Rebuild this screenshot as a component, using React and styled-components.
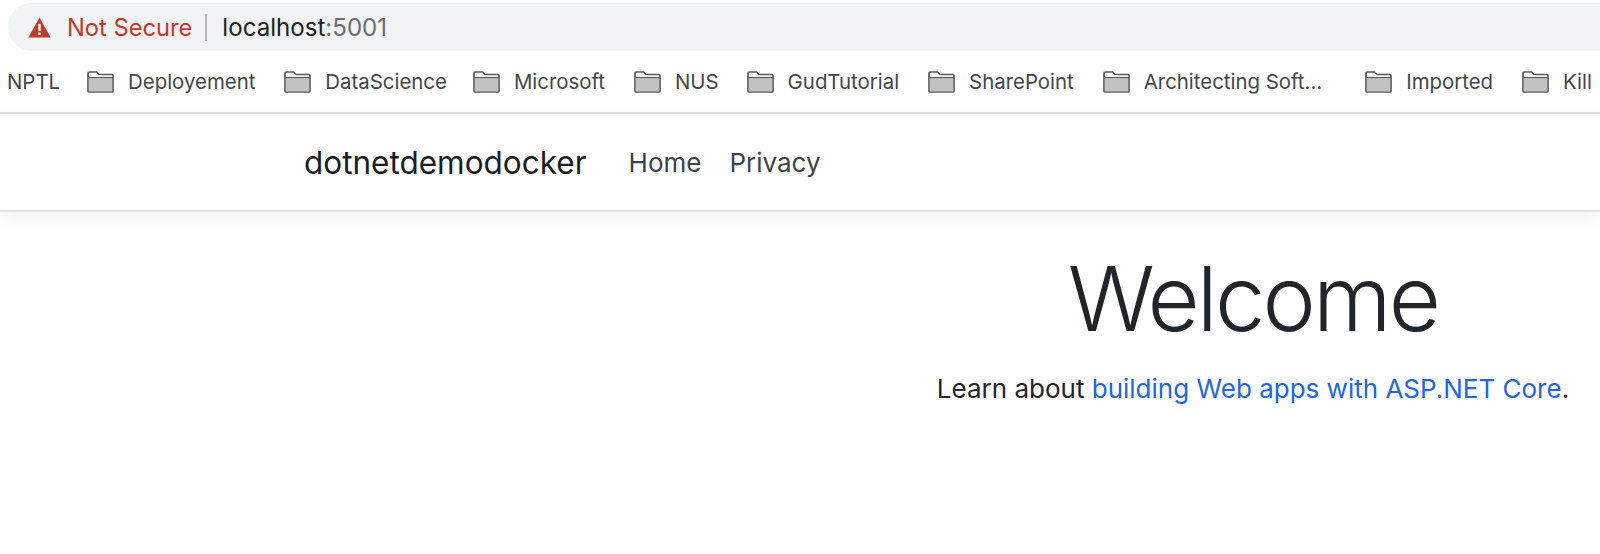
import React from "react";
import styled, { createGlobalStyle } from "styled-components";

const Global = createGlobalStyle`
  html, body {
    margin: 0;
    background: #fff;
    overflow: hidden;
  }
  body {
    font-family: Inter, "Liberation Sans", sans-serif;
  }
`;

const Page = styled.div`
  width: 1600px;
  height: 554px;
  overflow: hidden;
  display: flex;
  flex-direction: column;
`;

const Chrome = styled.header`
  height: 114px;
  box-sizing: border-box;
  border-bottom: 2px solid #e2e4e5;
  padding-top: 3px;
`;

const Omnibox = styled.div`
  height: 48px;
  margin-left: 8px;
  padding-left: 20px;
  display: flex;
  align-items: center;
  background: #f1f3f4;
  border-radius: 24px 0 0 24px;
`;

const Warning = styled.span`
  color: #c0392b;
  font-size: 23.7px;
  margin-left: 16px;
`;

const Divider = styled.span`
  width: 2px;
  height: 27px;
  margin: 0 15px 0 13px;
  background: #b4b6b8;
`;

const Host = styled.span`
  color: #202124;
  font-size: 24.1px;
`;

const Port = styled.span`
  color: #6b6e72;
`;

const Bookmarks = styled.nav`
  height: 61px;
  padding-left: 7px;
  display: flex;
  align-items: center;
  white-space: nowrap;
`;

const Bookmark = styled.div`
  display: flex;
  align-items: center;
  gap: 14px;
  margin-right: ${({ $after }) => $after}px;
  color: #43464a;
  font-size: 20.4px;
`;

const Navbar = styled.nav`
  height: 98px;
  box-sizing: border-box;
  padding: 0 0 0 304px;
  display: flex;
  align-items: center;
  background: #fff;
  border-bottom: 2px solid #e3e3e3;
  box-shadow: 0 4px 16px rgba(0, 0, 0, 0.06);
`;

const Brand = styled.a`
  color: #1c1c1e;
  font-size: 31.5px;
  margin-right: 42px;
`;

const NavLink = styled.a`
  color: #3e4349;
  font-size: 26px;
  margin-right: 28px;
`;

const Main = styled.main`
  padding-left: 906px;
  text-align: center;
  color: #212529;
`;

const Title = styled.h1`
  margin: 32px 0 0;
  font-size: 90px;
  font-weight: 300;
  line-height: 110px;
  letter-spacing: -2.8px;
`;

const Lead = styled.p`
  margin: 16px 0 0;
  font-size: 26px;
  line-height: 38px;
  white-space: nowrap;
`;

const DocLink = styled.a`
  color: #2468d8;
`;

const WarningIcon = () => (
  <svg width="23" height="21" viewBox="0 0 22 20">
    <path d="M11 .5 21.6 19.5H.4Z" fill="#c0392b" />
    <rect x="9.8" y="6.5" width="2.4" height="7" fill="#f1f3f4" />
    <rect x="9.8" y="14.8" width="2.4" height="2.4" fill="#f1f3f4" />
  </svg>
);

const FolderIcon = () => (
  <svg width="27" height="22" viewBox="0 0 27 22">
    <path d="M1 20V2.2C1 1.5 1.5 1 2.2 1H9.5L12 3.5H25C25.6 3.5 26 4 26 4.6V20C26 20.6 25.5 21 25 21H2C1.4 21 1 20.6 1 20Z" fill="#fff" stroke="#5a5a5a" strokeWidth="1.7" />
    <path d="M1.8 7.5H25.2V20.2H1.8Z" fill="#c2c2c2" />
    <path d="M1 6.6H26" stroke="#5a5a5a" strokeWidth="1.4" />
  </svg>
);

const bookmarks = [
  { name: "Deployement", after: 29 },
  { name: "DataScience", after: 26 },
  { name: "Microsoft", after: 29 },
  { name: "NUS", after: 28 },
  { name: "GudTutorial", after: 29 },
  { name: "SharePoint", after: 29 },
  { name: "Architecting Soft...", after: 43 },
  { name: "Imported", after: 29 },
  { name: "Kill", after: 0 },
];

export default function App() {
  return (
    <Page>
      <Global />
      <Chrome>
        <Omnibox>
          <WarningIcon />
          <Warning>Not Secure</Warning>
          <Divider />
          <Host>
            localhost<Port>:5001</Port>
          </Host>
        </Omnibox>
        <Bookmarks>
          <Bookmark $after={27}>NPTL</Bookmark>
          {bookmarks.map((b) => (
            <Bookmark key={b.name} $after={b.after}>
              <FolderIcon />
              {b.name}
            </Bookmark>
          ))}
        </Bookmarks>
      </Chrome>
      <Navbar>
        <Brand>dotnetdemodocker</Brand>
        <NavLink>Home</NavLink>
        <NavLink>Privacy</NavLink>
      </Navbar>
      <Main>
        <Title>Welcome</Title>
        <Lead>
          Learn about <DocLink>building Web apps with ASP.NET Core</DocLink>.
        </Lead>
      </Main>
    </Page>
  );
}
